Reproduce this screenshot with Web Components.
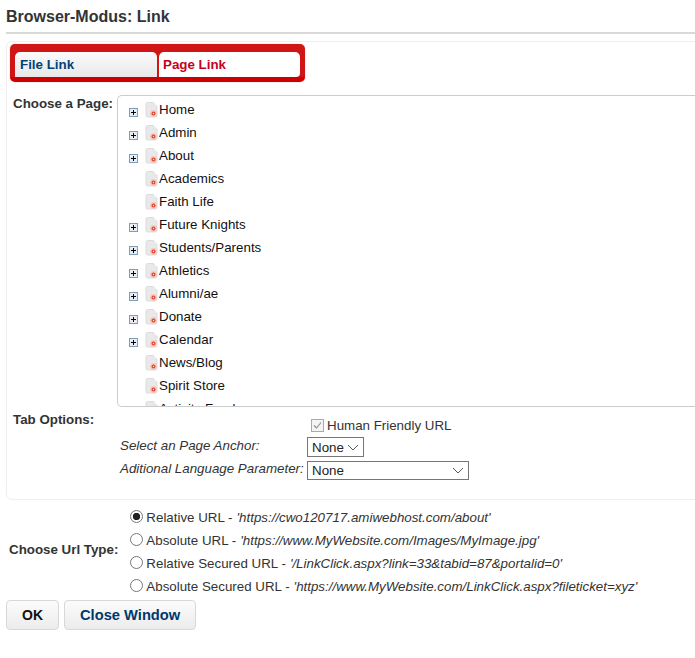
<!DOCTYPE html>
<html>
<head>
<meta charset="utf-8">
<title>Browser-Modus: Link</title>
<style>
  html, body { margin:0; padding:0; background:#fff; overflow:hidden; height:100%; }
  body { font-family:"Liberation Sans", Arial, sans-serif; }
</style>
</head>
<body>
<link-dialog heading="Browser-Modus: Link">
  <link-tabs slot="tabs"></link-tabs>
  <page-tree slot="tree"></page-tree>
  <tab-options slot="options"></tab-options>
  <url-types slot="types"></url-types>
  <push-button slot="buttons">OK</push-button>
  <push-button slot="buttons" navy>Close Window</push-button>
</link-dialog>
<script>
const pageItems = [
  ['Home', 1], ['Admin', 1], ['About', 1], ['Academics', 0], ['Faith Life', 0],
  ['Future Knights', 1], ['Students/Parents', 1], ['Athletics', 1], ['Alumni/ae', 1],
  ['Donate', 1], ['Calendar', 1], ['News/Blog', 0], ['Spirit Store', 0], ['Activity Feed', 0],
];

const urlItems = [
  ['Relative URL', "'https://cwo120717.amiwebhost.com/about'", true],
  ['Absolute URL', "'https://www.MyWebsite.com/Images/MyImage.jpg'"],
  ['Relative Secured URL', "'/LinkClick.aspx?link=33&tabid=87&portalid=0'"],
  ['Absolute Secured URL', "'https://www.MyWebsite.com/LinkClick.aspx?fileticket=xyz'"],
];

class LinkDialog extends HTMLElement {
  connectedCallback() {
    const shadow = this.attachShadow({mode: 'open'});
    shadow.innerHTML = `
      <style>
        :host { display:block; width:760px; color:#333; font:13.33px "Liberation Sans", Arial, sans-serif; }
        h1 { margin:0 0 7px 6px; height:25px; padding-top:7px; box-sizing:border-box; font-size:16px; line-height:19px; color:#333; border:0; }
        hr { margin:0 0 7px 6px; height:2px; border:0; background:#d9d9d9; }
        .panel { margin-left:6px; height:459px; box-sizing:border-box; border:1px solid #eee; border-radius:6px; padding:2px 3px 0; }
        .page { display:grid; grid-template-columns:104px 1fr; margin-top:13px; padding-left:3px; }
        .opts { display:grid; grid-template-columns:104px 1fr; padding-left:3px; margin-top:4px; }
        label { font-weight:bold; line-height:17px; white-space:nowrap; }
        .types { display:flex; align-items:center; margin:6px 0 0 9px; height:92px; gap:12px; }
        .types label { padding-bottom:5px; }
        .btns { display:flex; gap:5px; margin:2px 0 0 6px; }
      </style>
      <h1>${this.getAttribute('heading')}</h1>
      <hr>
      <div class="panel">
        <slot name="tabs"></slot>
        <div class="page"><label>Choose a Page:</label><slot name="tree"></slot></div>
        <div class="opts"><label>Tab Options:</label><slot name="options"></slot></div>
      </div>
      <div class="types"><label>Choose Url Type:</label><slot name="types"></slot></div>
      <div class="btns"><slot name="buttons"></slot></div>
    `;
  }
}

class LinkTabs extends HTMLElement {
  connectedCallback() {
    const shadow = this.attachShadow({mode: 'open'});
    shadow.innerHTML = `
      <style>
        :host { display:flex; gap:2px; width:295px; height:38px; box-sizing:border-box; padding:8px 5px 0; background:linear-gradient(#d01515 33px, #cc0000 33px); border-radius:5px; box-shadow:0 0 1px #c66; }
        div { height:25px; box-sizing:border-box; border-radius:5px 5px 0 0; font-weight:bold; font-size:13.33px; line-height:25px; }
        .off { width:142px; padding-left:5px; color:#00437a; background:linear-gradient(#fbfbfb, #e8e8e8); }
        .on { width:141px; padding-left:4px; color:#c8001e; background:#fff; border-radius:5px 5px 4px 0; }
      </style>
      <div class="off">File Link</div><div class="on">Page Link</div>
    `;
  }
}

class PageTree extends HTMLElement {
  connectedCallback() {
    const shadow = this.attachShadow({mode: 'open'});
    const rows = pageItems.map(([name, kids]) => `
      <div class="row">
        <span class="exp">${kids ? `<svg width="9" height="9" viewBox="0 0 9 9"><rect x=".5" y=".5" width="8" height="8" fill="#e8eef4" stroke="#7f9db9"/><path d="M2 4.5h5M4.5 2v5" stroke="#000"/></svg>` : ''}</span>
        <svg class="ico" width="13" height="16" viewBox="0 0 13 16"><path d="M1 2a1.5 1.5 0 0 1 1.5-1.5h6L12 4v9.5a1.5 1.5 0 0 1-1.5 1.5h-8A1.5 1.5 0 0 1 1 13.5z" fill="#e9e9e9" stroke="#dcdcdc"/><path d="M8.5 .5V4H12" fill="#f6f6f6" stroke="#e2e2e2"/><circle cx="8.5" cy="11.5" r="3.4" fill="#f6c8be"/><circle cx="8.5" cy="11.5" r="2" fill="#dc4a38"/><circle cx="8.5" cy="11.5" r=".7" fill="#fbe4df"/></svg>
        <span class="name">${name}</span>
      </div>`).join('');
    shadow.innerHTML = `
      <style>
        :host { display:block; height:312px; box-sizing:border-box; border:1px solid #ccc; border-right:0; border-radius:5px 0 0 5px; overflow:hidden; padding-top:2px; }
        .row { display:flex; height:23px; align-items:center; font-size:14px; }
        .exp { width:9px; height:9px; margin-left:11px; margin-right:7px; margin-top:6px; display:block; line-height:0; }
        .ico { display:block; margin-top:1px; }
        .name { padding-left:1px; line-height:17px; color:#111; font-size:13.33px; }
      </style>
      ${rows}
    `;
  }
}

class TabOptions extends HTMLElement {
  connectedCallback() {
    const shadow = this.attachShadow({mode: 'open'});
    shadow.innerHTML = `
      <style>
        :host { display:grid; grid-template-columns:190px auto; justify-content:start; row-gap:3px; font-size:13.33px; line-height:17px; color:#333; }
        .chk { grid-column:2; display:flex; align-items:center; gap:3px; height:17px; padding-left:4px; margin-top:6px; }
        .box { width:13px; height:13px; box-sizing:border-box; border:1px solid #aaa; background:#f4f4f4; display:block; }
        i { padding-left:3px; align-self:start; white-space:nowrap; }
        .sel { display:flex; align-items:center; justify-content:space-between; height:20px; box-sizing:border-box; border:1px solid #767676; padding:0 4px 0 4px; color:#222; }
        .a { width:57px; } .b { width:162px; height:19px; margin-top:1px; }
      </style>
      <div class="chk"><svg class="box" viewBox="0 0 11 11"><path d="M2 5.5l2.5 2.5L9 2.5" fill="none" stroke="#8a8a8a" stroke-width="1.1"/></svg><span>Human Friendly URL</span></div>
      <i>Select an Page Anchor:</i>
      <div class="sel a">None<svg width="12" height="7" viewBox="0 0 12 7"><path d="M1 1l5 5 5-5" fill="none" stroke="#555"/></svg></div>
      <i>Aditional Language Parameter:</i>
      <div class="sel b">None<svg width="12" height="7" viewBox="0 0 12 7"><path d="M1 1l5 5 5-5" fill="none" stroke="#555"/></svg></div>
    `;
  }
}

class UrlTypes extends HTMLElement {
  connectedCallback() {
    const shadow = this.attachShadow({mode: 'open'});
    const esc = s => s.replace(/&/g, '&amp;');
    shadow.innerHTML = `
      <style>
        :host { display:block; font-size:13.33px; color:#333; white-space:nowrap; }
        .row { display:flex; align-items:center; height:23px; }
        .dot { width:13px; height:13px; box-sizing:border-box; border:1px solid #767676; border-radius:50%; margin-right:3px; margin-top:-3px; background:#fff; }
        .dot.on { background:radial-gradient(circle, #222 0 3.4px, #fff 4px); }
        i { padding-left:4px; }
      </style>
      ${urlItems.map(([name, url, on]) => `<div class="row"><span class="dot${on ? ' on' : ''}"></span><span>${name} -</span><i>${esc(url)}</i></div>`).join('')}
    `;
  }
}

class PushButton extends HTMLElement {
  connectedCallback() {
    const shadow = this.attachShadow({mode: 'open'});
    shadow.innerHTML = `
      <style>
        :host { display:block; height:30px; box-sizing:border-box; border:1px solid #d8d8d8; border-radius:4px; background:linear-gradient(#fbfbfb, #ececec); padding:0 15px; font-weight:bold; font-size:14px; line-height:28px; color:#111; }
        :host([navy]) { color:#00386b; font-size:14.7px; }
      </style>
      <slot></slot>
    `;
  }
}

customElements.define('link-tabs', LinkTabs);
customElements.define('page-tree', PageTree);
customElements.define('tab-options', TabOptions);
customElements.define('url-types', UrlTypes);
customElements.define('push-button', PushButton);
customElements.define('link-dialog', LinkDialog);
</script>
</body>
</html>
